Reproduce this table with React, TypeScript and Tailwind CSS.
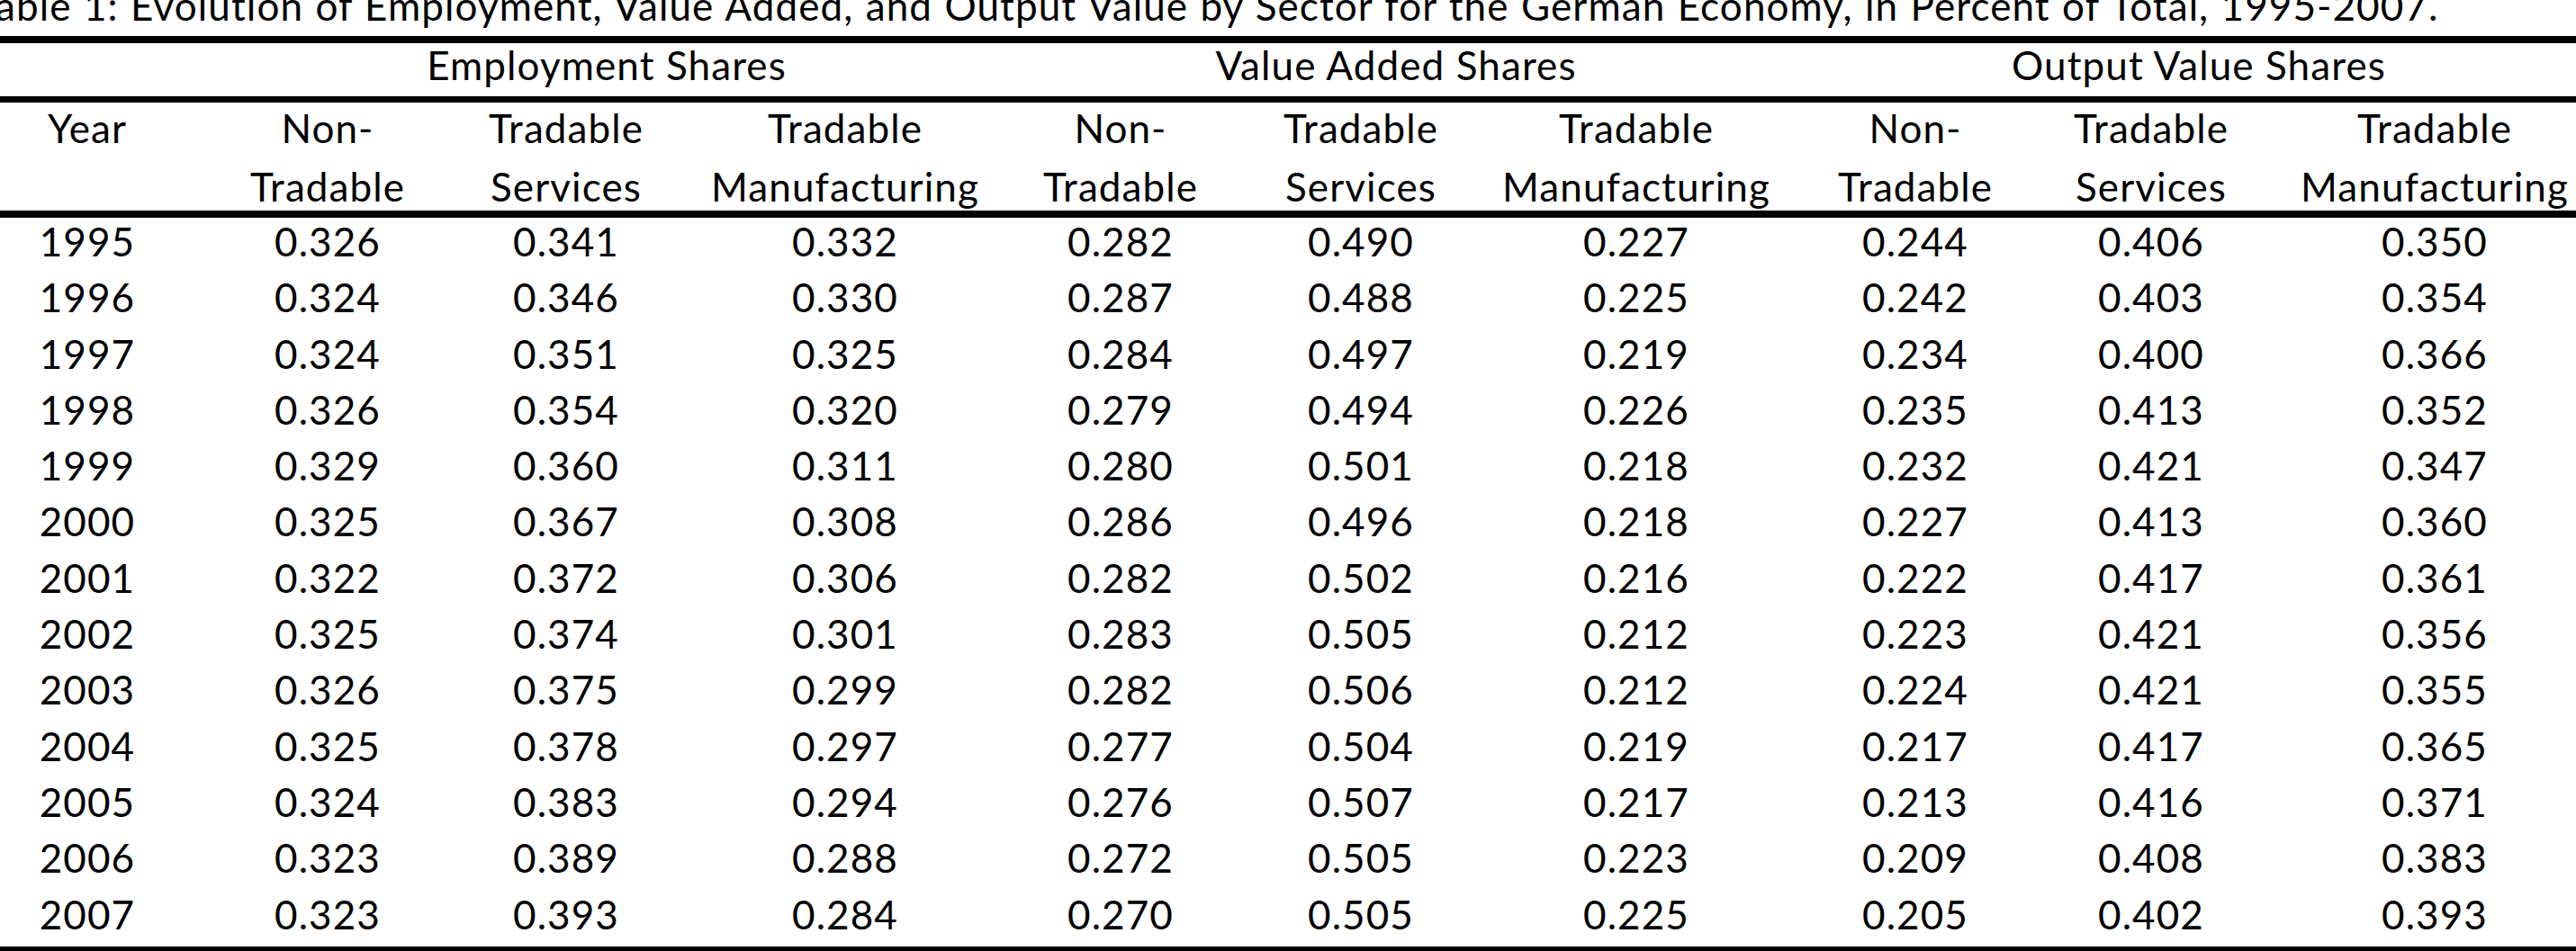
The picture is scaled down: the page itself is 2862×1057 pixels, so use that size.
import React from 'react';

// column grid: widths picked so each centered cell lands on the reference's column centre
const GRID =
  'grid grid-cols-[194px_340px_190px_430px_182px_352px_260px_360px_164px_466px]';

const GROUPS = ['Employment Shares', 'Value Added Shares', 'Output Value Shares'];

const HEADERS: [string, string][] = [
  ['Year', ''],
  ['Non-', 'Tradable'],
  ['Tradable', 'Services'],
  ['Tradable', 'Manufacturing'],
  ['Non-', 'Tradable'],
  ['Tradable', 'Services'],
  ['Tradable', 'Manufacturing'],
  ['Non-', 'Tradable'],
  ['Tradable', 'Services'],
  ['Tradable', 'Manufacturing'],
];

const ROWS: string[][] = [
  ['1995', '0.326', '0.341', '0.332', '0.282', '0.490', '0.227', '0.244', '0.406', '0.350'],
  ['1996', '0.324', '0.346', '0.330', '0.287', '0.488', '0.225', '0.242', '0.403', '0.354'],
  ['1997', '0.324', '0.351', '0.325', '0.284', '0.497', '0.219', '0.234', '0.400', '0.366'],
  ['1998', '0.326', '0.354', '0.320', '0.279', '0.494', '0.226', '0.235', '0.413', '0.352'],
  ['1999', '0.329', '0.360', '0.311', '0.280', '0.501', '0.218', '0.232', '0.421', '0.347'],
  ['2000', '0.325', '0.367', '0.308', '0.286', '0.496', '0.218', '0.227', '0.413', '0.360'],
  ['2001', '0.322', '0.372', '0.306', '0.282', '0.502', '0.216', '0.222', '0.417', '0.361'],
  ['2002', '0.325', '0.374', '0.301', '0.283', '0.505', '0.212', '0.223', '0.421', '0.356'],
  ['2003', '0.326', '0.375', '0.299', '0.282', '0.506', '0.212', '0.224', '0.421', '0.355'],
  ['2004', '0.325', '0.378', '0.297', '0.277', '0.504', '0.219', '0.217', '0.417', '0.365'],
  ['2005', '0.324', '0.383', '0.294', '0.276', '0.507', '0.217', '0.213', '0.416', '0.371'],
  ['2006', '0.323', '0.389', '0.288', '0.272', '0.505', '0.223', '0.209', '0.408', '0.383'],
  ['2007', '0.323', '0.393', '0.284', '0.270', '0.505', '0.225', '0.205', '0.402', '0.393'],
];

function Rule({ thick = 'h-[8px]' }: { thick?: string }) {
  return <div className={`${thick} w-full bg-black`} />;
}

export default function App() {
  return (
    <div className="w-[2862px] h-[1057px] overflow-hidden bg-white text-black font-['Lato',sans-serif] text-[44px] tracking-[1.1px]">
      <div className="w-[2938px]">
        {/* title, top of it runs off the page */}
        <div className="flex h-[40px]">
          <div className="-mt-[20px] -ml-[27px] leading-[52px] whitespace-nowrap [word-spacing:1px]">
            Table 1: Evolution of Employment, Value Added, and Output Value by Sector for the
            German Economy, in Percent of Total, 1995-2007.
          </div>
        </div>
        <Rule />

        {/* group header */}
        <div className={`${GRID} h-[59px] leading-[49px]`}>
          <div />
          {GROUPS.map((g) => (
            <div key={g} className="col-span-3 flex justify-center whitespace-nowrap">
              {g}
            </div>
          ))}
        </div>
        <Rule thick="h-[7px]" />

        {/* column headers */}
        <div className={`${GRID} h-[120px]`}>
          {HEADERS.map(([a, b], i) => (
            <div key={i} className="flex flex-col items-center whitespace-nowrap">
              <div className="leading-[56px]">{a}</div>
              <div className="pt-[5px] leading-[64px]">{b || '\u00a0'}</div>
            </div>
          ))}
        </div>
        <Rule />

        {/* data */}
        {ROWS.map((r) => (
          <div key={r[0]} className={`${GRID} h-[62.3px] leading-[53px]`}>
            {r.map((v, i) => (
              <div key={i} className="flex justify-center whitespace-nowrap">
                {v}
              </div>
            ))}
          </div>
        ))}
        <Rule />
      </div>
    </div>
  );
}
